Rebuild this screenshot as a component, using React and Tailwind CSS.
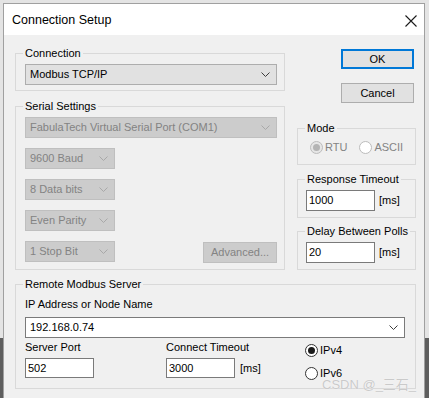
import React from 'react';

const font = "font-['Liberation_Sans',Arial,sans-serif]";

function Chevron({ disabled }) {
    return (
        <svg width="9" height="5" viewBox="0 0 9 5" className="shrink-0">
            <path d="M0.5 0.5 L4.5 4.5 L8.5 0.5" fill="none" stroke={disabled ? "#a8a8a8" : "#3c3c3c"} strokeWidth="1" />
        </svg>
    );
}

function Combo({ value, className, disabled, white }) {
    let look = "bg-[#e1e1e1] border-[#adadad] text-black";
    if (disabled) look = "bg-[#cccccc] border-[#bfbfbf] text-[#838383]";
    if (white) look = "bg-white border-[#7a7a7a] text-black";
    return (
        <div className={"flex items-center justify-between h-[21px] border pl-[4px] pr-[6px] " + look + " " + className}>
            <span className="leading-[13px] whitespace-nowrap">{value}</span>
            <Chevron disabled={disabled} />
        </div>
    );
}

function Group({ title, className, children }) {
    return (
        <fieldset className={"border border-[#d9d9d9] " + className}>
            <legend className="ml-[7px] px-[2px] leading-[13px]">{title}</legend>
            {children}
        </fieldset>
    );
}

function TextBox({ value, className }) {
    return (
        <div className={"h-[20px] bg-white border border-[#7a7a7a] pl-[2px] flex items-center leading-[13px] " + className}>
            {value}
        </div>
    );
}

function Radio({ label, checked, disabled }) {
    const ring = disabled ? "border-[#bcbcbc] bg-[#e6e6e6]" : "border-[#333333] bg-white";
    const ringOff = disabled ? "border-[#bcbcbc] bg-white" : "border-[#333333] bg-white";
    return (
        <div className="flex items-center">
            <div className={"w-[13px] h-[13px] rounded-full border flex items-center justify-center " + (checked ? ring : ringOff)}>
                {checked && <div className={"w-[7px] h-[7px] rounded-full " + (disabled ? "bg-[#b4b4b4]" : "bg-[#1a1a1a]")} />}
            </div>
            <span className={"ml-[2px] leading-[13px] " + (disabled ? "text-[#838383]" : "text-black")}>{label}</span>
        </div>
    );
}

function App() {
    return (
        <div className={"w-[429px] h-[398px] overflow-hidden pl-[3px] pt-[3px] text-[11px] bg-[linear-gradient(to_bottom,#e4e4e4_338px,#5e5e5e_338px)] " + font}>
            <div className="relative w-[422px] h-[400px] border border-[#a0a0a0] bg-[#f0f0f0]">
                {/* title bar */}
                <div className="h-[31px] bg-white flex items-center justify-between pl-[8px] pr-[7px]">
                    <span className="text-[12.5px] text-black mt-[2px]">Connection Setup</span>
                    <svg width="12" height="12" viewBox="0 0 12 12" className="mt-[2px]">
                        <path d="M0.5 0.5 L11.5 11.5 M11.5 0.5 L0.5 11.5" stroke="#1a1a1a" strokeWidth="1.1" />
                    </svg>
                </div>

                <div className="pl-[11px] pt-[12px]">
                    <div className="flex items-start">
                        {/* left column */}
                        <div className="w-[270px]">
                            <Group title="Connection" className="w-[270px]">
                                <div className="pl-[9px] pt-[4px] pb-[5px]">
                                    <Combo value="Modbus TCP/IP" className="w-[252px]" />
                                </div>
                            </Group>
                            <Group title="Serial Settings" className="w-[270px] mt-[9px]">
                                <div className="pl-[9px] pt-[4px] pb-[6px] flex flex-col gap-[10px]">
                                    <Combo value="FabulaTech Virtual Serial Port (COM1)" className="w-[252px]" disabled />
                                    <Combo value="9600 Baud" className="w-[90px]" disabled />
                                    <Combo value="8 Data bits" className="w-[90px]" disabled />
                                    <Combo value="Even Parity" className="w-[90px]" disabled />
                                    <div className="flex items-start w-[252px] justify-between">
                                        <Combo value="1 Stop Bit" className="w-[90px]" disabled />
                                        <div className="mt-[1px] w-[74px] h-[21px] bg-[#cccccc] border border-[#bfbfbf] text-[#838383] flex items-center justify-center leading-[13px]">
                                            Advanced...
                                        </div>
                                    </div>
                                </div>
                            </Group>
                        </div>

                        {/* right column */}
                        <div className="ml-[12px] w-[119px]">
                            <div className="ml-[44px] mt-[2px] flex flex-col gap-[14px]">
                                <div className="w-[73px] h-[20px] bg-[#e1e1e1] border-2 border-[#0078d7] flex items-center justify-center text-black">OK</div>
                                <div className="w-[73px] h-[20px] bg-[#e1e1e1] border border-[#adadad] flex items-center justify-center text-black">Cancel</div>
                            </div>
                            <Group title="Mode" className="w-[119px] mt-[19px]">
                                <div className="pl-[12px] pt-[6px] pb-[10px] flex items-center gap-[12px]">
                                    <Radio label="RTU" checked disabled />
                                    <Radio label="ASCII" disabled />
                                </div>
                            </Group>
                            <Group title="Response Timeout" className="w-[119px] mt-[8px]">
                                <div className="pl-[8px] pt-[4px] pb-[6px] flex items-center">
                                    <TextBox value="1000" className="w-[69px] h-[21px]" />
                                    <span className="ml-[4px]">[ms]</span>
                                </div>
                            </Group>
                            <Group title="Delay Between Polls" className="w-[119px] mt-[7px]">
                                <div className="pl-[8px] pt-[4px] pb-[6px] flex items-center">
                                    <TextBox value="20" className="w-[69px] h-[21px]" />
                                    <span className="ml-[4px]">[ms]</span>
                                </div>
                            </Group>
                        </div>
                    </div>

                    <Group title="Remote Modbus Server" className="w-[401px] mt-[8px]">
                        <div className="pl-[9px] pt-[7px] pb-[8px]">
                            <div className="leading-[13px]">IP Address or Node Name</div>
                            <Combo value="192.168.0.74" className="w-[380px] mt-[6px]" white />
                            <div className="flex items-start mt-[3px]">
                                <div className="w-[141px]">
                                    <div className="leading-[13px]">Server Port</div>
                                    <TextBox value="502" className="w-[69px] mt-[4px]" />
                                </div>
                                <div className="w-[139px]">
                                    <div className="leading-[13px]">Connect Timeout</div>
                                    <div className="flex items-center mt-[4px]">
                                        <TextBox value="3000" className="w-[69px]" />
                                        <span className="ml-[5px]">[ms]</span>
                                    </div>
                                </div>
                                <div className="flex flex-col gap-[10px] mt-[3px]">
                                    <Radio label="IPv4" checked />
                                    <Radio label="IPv6" />
                                </div>
                            </div>
                        </div>
                    </Group>
                </div>

                <span className="absolute left-[318px] top-[373px] text-[13px] leading-[16px] text-[#cacaca] [text-shadow:0_0_1px_#ffffff] font-['Liberation_Sans','Noto_Sans_CJK_SC',sans-serif]">
                    CSDN @_三石_
                </span>
            </div>
        </div>
    );
}

export default App;
